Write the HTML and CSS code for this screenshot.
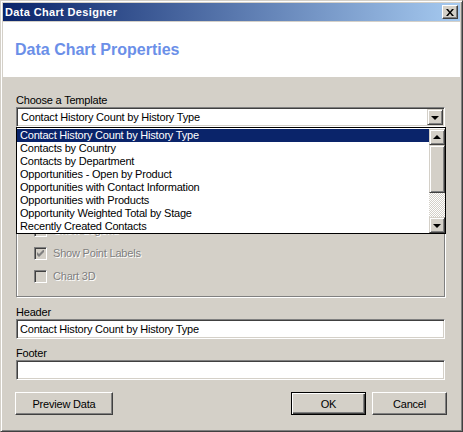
FILE: index.html
```html
<!DOCTYPE html>
<html>
<head>
<meta charset="utf-8">
<title>Data Chart Designer</title>
<link rel="stylesheet" href="styles.css">
</head>
<body>
<div class="window">
  <div class="titlebar">
    <span class="title-text">Data Chart Designer</span>
    <button class="close-btn" aria-label="Close">
      <svg width="8" height="7" viewBox="0 0 8 7"><path d="M0 0h2l2 2.5L6 0h2L5 3.5 8 7H6L4 4.5 2 7H0l3-3.5z" fill="#000"/></svg>
    </button>
  </div>
  <div class="banner">
    <h1 class="banner-title">Data Chart Properties</h1>
  </div>
  <div class="content">
    <div class="label">Choose a Template</div>
    <div class="combo-wrap">
      <div class="combo">
        <span class="combo-text">Contact History Count by History Type</span>
        <span class="combo-btn"><span class="arrow-down"></span></span>
      </div>
      <div class="dropdown">
        <ul class="dropdown-items">
          <li class="selected">Contact History Count by History Type</li>
          <li>Contacts by Country</li>
          <li>Contacts by Department</li>
          <li>Opportunities - Open by Product</li>
          <li>Opportunities with Contact Information</li>
          <li>Opportunities with Products</li>
          <li>Opportunity Weighted Total by Stage</li>
          <li>Recently Created Contacts</li>
        </ul>
        <div class="scrollbar">
          <span class="sb-btn"><span class="arrow-up"></span></span>
          <span class="sb-thumb"></span>
          <span class="sb-track"></span>
          <span class="sb-btn"><span class="arrow-down"></span></span>
        </div>
      </div>
    </div>

    <div class="groupbox">
      <div class="checks">
        <div class="check-row"><span class="checkbox checked"><svg width="7" height="7" viewBox="0 0 7 7"><path d="M0 2v3l2 2 5-5V-1L2 4z" fill="#808080"/></svg></span><span class="disabled-text">Show Legend</span></div>
        <div class="check-row"><span class="checkbox checked"><svg width="7" height="7" viewBox="0 0 7 7"><path d="M0 2v3l2 2 5-5V-1L2 4z" fill="#808080"/></svg></span><span class="disabled-text">Show Point Labels</span></div>
        <div class="check-row"><span class="checkbox"></span><span class="disabled-text">Chart 3D</span></div>
      </div>
    </div>

    <div class="label header-label">Header</div>
    <input class="textfield" type="text" readonly value="Contact History Count by History Type">
    <div class="label footer-label">Footer</div>
    <input class="textfield" type="text" readonly value="">

    <div class="buttons">
      <button class="btn preview">Preview Data</button>
      <div class="btn-right">
        <button class="btn default">OK</button>
        <button class="btn">Cancel</button>
      </div>
    </div>
  </div>
</div>
</body>
</html>
```

FILE: styles.css
```css
* { box-sizing: border-box; }
html, body { margin: 0; padding: 0; background: #d4d0c8; }
body { font-family: "Liberation Sans", Arial, sans-serif; font-size: 11px; letter-spacing: -0.2px; color: #000; }

.window {
  width: 463px;
  height: 432px;
  background: #d4d0c8;
  border: 1px solid;
  border-color: #d4d0c8 #404040 #404040 #d4d0c8;
  box-shadow: inset 1px 1px 0 #fff, inset -1px -1px 0 #808080;
  padding: 2px;
  display: flex;
  flex-direction: column;
}

.titlebar {
  height: 18px;
  margin-bottom: 1px;
  background: linear-gradient(to right, #0a246a, #a6caf0);
  display: flex;
  align-items: center;
  justify-content: space-between;
  padding: 0 2px 0 2px;
}
.title-text {
  color: #fff;
  font-weight: bold;
  font-size: 11px;
  letter-spacing: 0.35px;
  line-height: 18px;
}
.close-btn {
  width: 16px;
  height: 14px;
  padding: 0;
  margin: 0;
  background: #d4d0c8;
  border: 1px solid;
  border-color: #fff #404040 #404040 #fff;
  box-shadow: inset -1px -1px 0 #808080;
  display: flex;
  align-items: center;
  justify-content: center;
}
.close-btn svg { display: block; }

.banner {
  height: 55px;
  background: #fff;
  padding: 18px 12px 0;
}
.banner-title {
  margin: 0;
  font-size: 16px;
  line-height: 20px;
  font-weight: bold;
  letter-spacing: 0;
  color: #6b8fe8;
}

.content {
  flex: 1;
  padding: 16px 15px 0 13px;
  display: flex;
  flex-direction: column;
}

.label { line-height: 14px; white-space: nowrap; }

.combo-wrap { position: relative; }
.combo {
  height: 20px;
  background: #fff;
  border: 1px solid;
  border-color: #808080 #fff #fff #808080;
  box-shadow: inset 1px 1px 0 #404040, inset -1px -1px 0 #d4d0c8;
  padding: 1px 1px 1px 4px;
  display: flex;
  align-items: center;
  justify-content: space-between;
}
.combo-text { line-height: 14px; white-space: nowrap; }
.combo-btn {
  width: 16px;
  height: 16px;
  background: #d4d0c8;
  border: 1px solid;
  border-color: #d4d0c8 #404040 #404040 #d4d0c8;
  box-shadow: inset 1px 1px 0 #fff, inset -1px -1px 0 #808080;
  display: flex;
  align-items: center;
  justify-content: center;
  flex: none;
}
.arrow-down, .arrow-up {
  width: 0; height: 0;
  border-left: 4px solid transparent;
  border-right: 4px solid transparent;
}
.arrow-down { border-top: 4px solid #000; margin-top: 1px; }
.arrow-up { border-bottom: 4px solid #000; margin-top: -1px; }

.dropdown {
  position: absolute;
  top: 100%;
  left: 0;
  width: 430px;
  height: 107px;
  background: #fff;
  border: 1px solid #000;
  padding-top: 1px;
  display: flex;
  z-index: 5;
}
.dropdown-items {
  list-style: none;
  margin: 0;
  padding: 0;
  flex: 1;
}
.dropdown-items li {
  height: 13px;
  line-height: 13px;
  padding-left: 3px;
  white-space: nowrap;
}
.dropdown-items li.selected { background: #0a246a; color: #fff; }

.scrollbar {
  width: 16px;
  display: flex;
  flex-direction: column;
}
.sb-btn, .sb-thumb {
  background: #d4d0c8;
  border: 1px solid;
  border-color: #d4d0c8 #404040 #404040 #d4d0c8;
  box-shadow: inset 1px 1px 0 #fff, inset -1px -1px 0 #808080;
}
.sb-btn { height: 16px; display: flex; align-items: center; justify-content: center; }
.sb-thumb { height: 48px; }
.sb-track {
  height: 24px;
  background-color: #fff;
  background-image: repeating-conic-gradient(#d4d0c8 0 25%, #fff 0 50%);
  background-size: 2px 2px;
}

.groupbox {
  margin-top: 13px;
  height: 157px;
  border: 1px solid #808080;
  box-shadow: 1px 1px 0 #fff, inset 1px 1px 0 #fff;
  padding: 0 16px 13px 17px;
  display: flex;
  flex-direction: column;
  justify-content: flex-end;
}
.checks {
  display: flex;
  flex-direction: column;
  gap: 10px;
}
.check-row {
  height: 13px;
  display: flex;
  align-items: center;
  gap: 6px;
}
.checkbox {
  width: 13px;
  height: 13px;
  flex: none;
  background: #d4d0c8;
  border: 1px solid;
  border-color: #808080 #fff #fff #808080;
  box-shadow: inset 1px 1px 0 #404040, inset -1px -1px 0 #d4d0c8;
  display: flex;
  align-items: center;
  justify-content: center;
}
.checkbox svg { display: block; }
.disabled-text {
  color: #808080;
  text-shadow: 1px 1px 0 #fff;
  line-height: 13px;
  white-space: nowrap;
}

.header-label { margin-top: 8px; }
.footer-label { margin-top: 7px; }
.textfield {
  display: block;
  width: 100%;
  height: 20px;
  margin: 0;
  font-family: "Liberation Sans", Arial, sans-serif;
  font-size: 11px;
  letter-spacing: -0.2px;
  color: #000;
  background: #fff;
  border: 1px solid;
  border-color: #808080 #fff #fff #808080;
  box-shadow: inset 1px 1px 0 #404040, inset -1px -1px 0 #d4d0c8;
  padding: 0 3px;
  outline: none;
}

.buttons {
  margin: 12px -2px 0 -1px;
  display: flex;
  justify-content: space-between;
}
.btn-right { display: flex; gap: 6px; }
.btn {
  height: 23px;
  width: 75px;
  padding: 0;
  font-family: "Liberation Sans", Arial, sans-serif;
  font-size: 11px;
  letter-spacing: -0.2px;
  color: #000;
  background: #d4d0c8;
  border: 1px solid;
  border-color: #fff #404040 #404040 #fff;
  box-shadow: inset -1px -1px 0 #808080;
}
.btn.preview { width: 98px; }
.btn.default {
  border: 1px solid #000;
  box-shadow: inset 1px 1px 0 #fff, inset -1px -1px 0 #404040, inset -2px -2px 0 #808080;
}
```
